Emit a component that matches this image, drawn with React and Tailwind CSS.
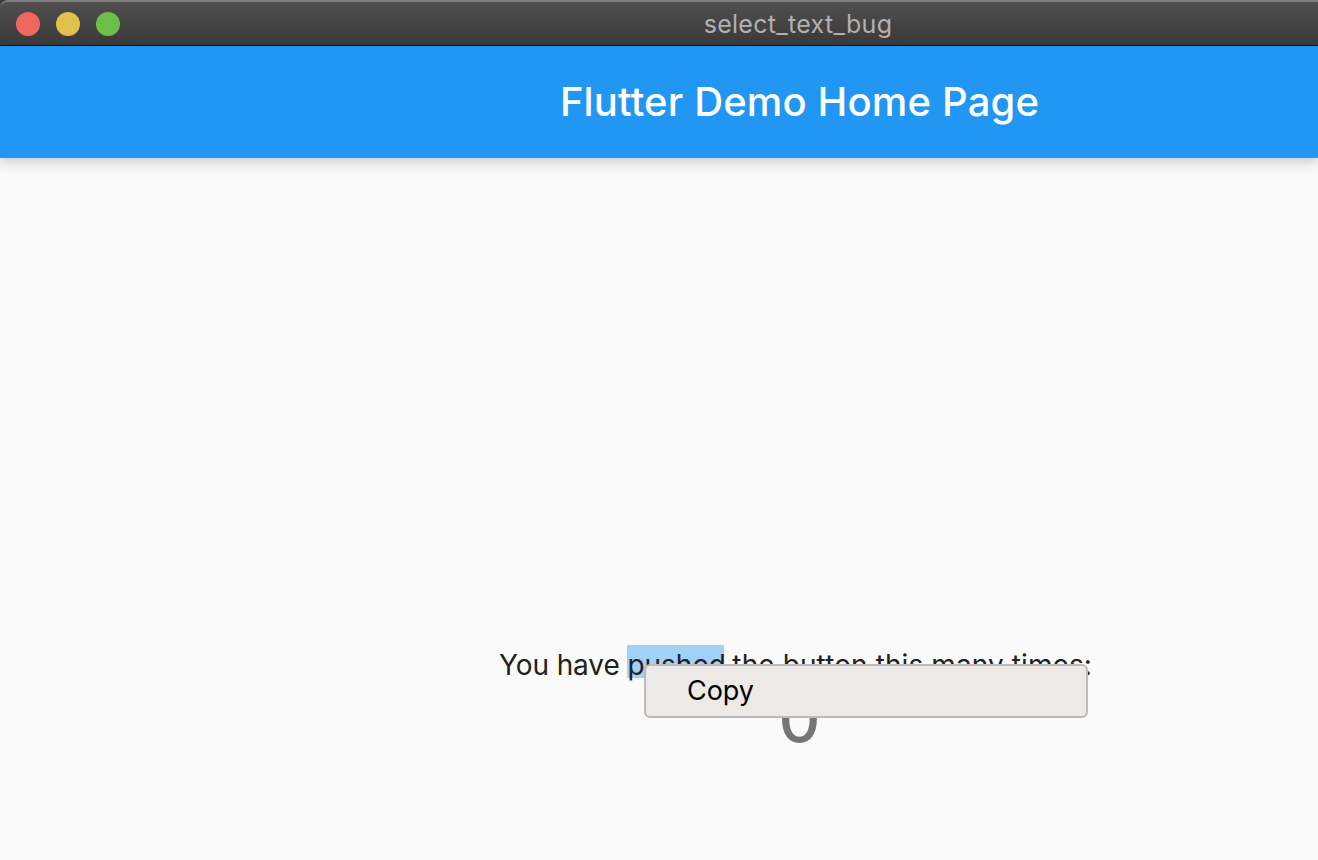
const App = () => {
  return (
    <div className="h-[860px] w-[1318px] overflow-hidden flex flex-col bg-[#fafafa] font-['Inter','Noto_Sans',sans-serif]">
      {/* window title bar */}
      <div className="h-[46px] shrink-0 bg-[#3a3a3a]">
        <div className="h-full flex items-center relative rounded-tl-[8px] border-b border-[#111] border-t-2 border-t-[#7c7c7c] bg-gradient-to-b from-[#504e4e] to-[#3b3a3a]">
          <div className="flex gap-[16px] pl-[16px]">
            <span className="w-6 h-6 rounded-full bg-[#f1675f]" />
            <span className="w-6 h-6 rounded-full bg-[#e2c04c]" />
            <span className="w-6 h-6 rounded-full bg-[#6cc04a]" />
          </div>
          <div className="absolute left-[278px] right-0 pt-[2px] text-center text-[25px] leading-none tracking-[0.3px] text-[#b2b0b0]">
            select_text_bug
          </div>
        </div>
      </div>

      {/* app bar */}
      <div className="h-[112px] shrink-0 flex items-center justify-center pl-[281px] bg-[#2196f3] text-white text-[40px] font-medium tracking-[0.15px] shadow-[0_4px_12px_rgba(0,0,0,0.2)] relative z-10">
        Flutter Demo Home Page
      </div>

      {/* body */}
      <div className="flex-1 flex flex-col items-center pl-[273px] pt-[486px] relative">
        <div className="relative text-[28px] leading-[42px] text-[#212121] whitespace-nowrap">
          <span className="tracking-[-0.1px]">You have </span><span className="inline-block h-[33px] w-[97px] leading-[41px] bg-[#a2d1f7]">pushed</span><span className="tracking-[0.1px]"> the button this many times:</span>
          <div className="absolute left-[145px] top-[20px] w-[444px] h-[54px] rounded-[6px] border-2 border-[#bdbbb9] bg-[#ece9e6] pl-[41px] text-black text-[27px] leading-[50px]">
            Copy
          </div>
        </div>
        <div className="text-[#757575] text-[65px] font-medium leading-[72px] ml-[8px] -mt-[3px]">0</div>
      </div>
    </div>
  );
};

export default App;
